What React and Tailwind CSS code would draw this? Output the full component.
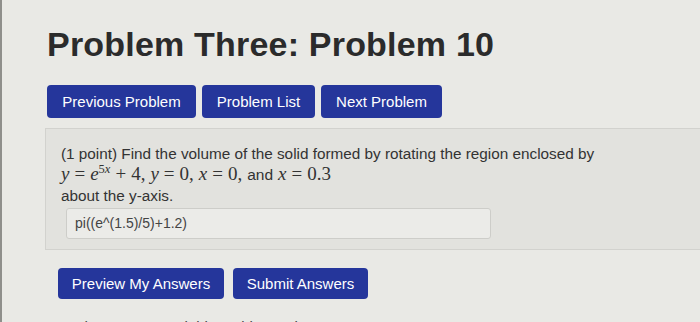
import React from "react";

const Btn = ({ children, className = "" }) => (
  <div
    className={`flex items-center justify-center rounded-[4px] bg-[#25369b] text-white text-[15px] leading-none ${className}`}
  >
    {children}
  </div>
);

const Op = ({ children }) => <span className="mx-[5px]">{children}</span>;

export default function App() {
  return (
    <div
      className="relative h-[322px] w-[700px] overflow-hidden bg-[#e9e9e5] border-l-[2px] border-[#8f8f8b] text-[#333]"
      style={{ fontFamily: '"Liberation Sans", Arial, sans-serif' }}
    >
      <div className="pl-[45px]">
        <h1 className="pt-[24px] text-[34px] leading-[40px] font-bold text-[#2b2b2b] tracking-[0.2px]">
          Problem Three: Problem 10
        </h1>
        <div className="mt-[21px] flex gap-[6px]">
          <Btn className="h-[33px] w-[149px]">Previous Problem</Btn>
          <Btn className="h-[33px] w-[113px]">Problem List</Btn>
          <Btn className="h-[33px] w-[121px]">Next Problem</Btn>
        </div>
        <div className="mt-[10px] -ml-[2px] h-[122px] border-y border-l border-[#d2d2ce] bg-[#e2e2de] pl-[15px] pt-[15px]">
          <div className="text-[15.3px] leading-[20px] text-[#333]">
            (1 point) Find the volume of the solid formed by rotating the region enclosed by
          </div>
          <div
            className="text-[19px] leading-[20px] text-[#333] whitespace-nowrap"
            style={{ fontFamily: '"Liberation Serif", "Times New Roman", serif' }}
          >
            <i>y</i>
            <Op>=</Op>
            <i>e</i>
            <span className="relative -top-[7px] text-[12.5px]">
              5<i>x</i>
            </span>
            <Op>+</Op>4,<span className="ml-[5px]" />
            <i>y</i>
            <Op>=</Op>0,<span className="ml-[5px]" />
            <i>x</i>
            <Op>=</Op>0,<span className="ml-[5px]" />
            <span
              className="text-[15.5px]"
              style={{ fontFamily: '"Liberation Sans", Arial, sans-serif' }}
            >
              and
            </span>
            <span className="ml-[5px]" />
            <i>x</i>
            <Op>=</Op>0.3
          </div>
          <div className="text-[15.3px] leading-[20px] text-[#333]">about the y-axis.</div>
          <div className="mt-[2px] ml-[5px] flex h-[31px] w-[425px] items-center rounded-[3px] border border-[#cdcdc9] bg-[#ebebe8] pl-[8px] text-[14px] text-[#444]">
            pi((e^(1.5)/5)+1.2)
          </div>
        </div>
        <div className="mt-[18px] ml-[11px] flex gap-[9px]">
          <Btn className="h-[31px] w-[166px]">Preview My Answers</Btn>
          <Btn className="h-[31px] w-[135px]">Submit Answers</Btn>
        </div>
        <div className="mt-[18px] ml-[8px] text-[15px] leading-[20px] text-[#444]">
          You have attempted this problem 0 times.
        </div>
      </div>
    </div>
  );
}
